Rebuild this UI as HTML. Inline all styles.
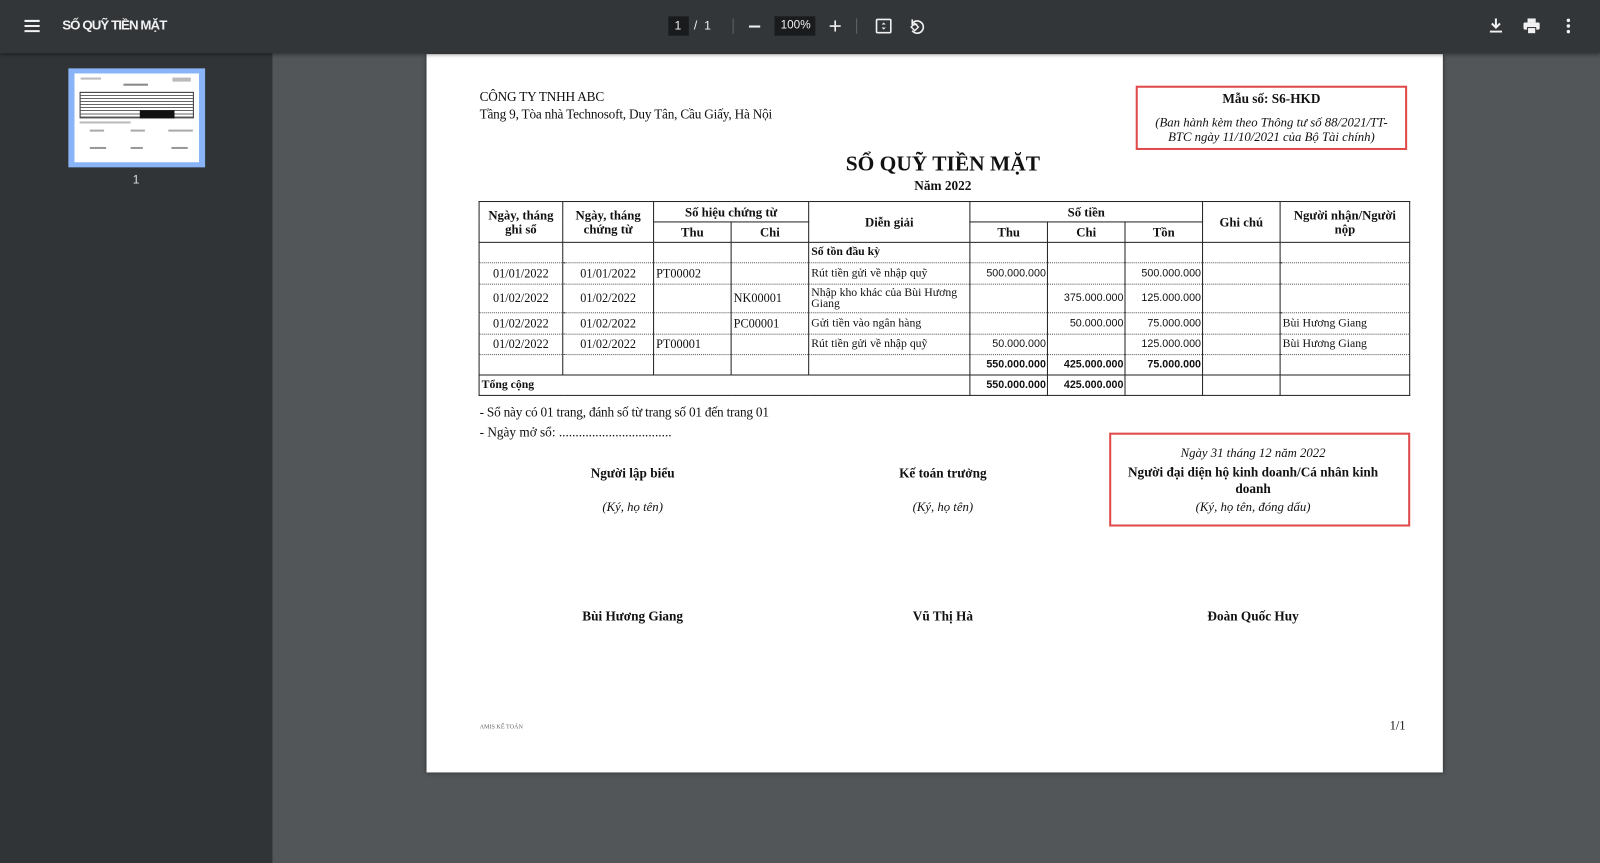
<!DOCTYPE html>
<html><head><meta charset="utf-8"><style>
*{margin:0;padding:0;box-sizing:border-box}
html,body{width:1600px;height:863px;overflow:hidden;background:#525659}
#w{position:absolute;left:0;top:0;width:1568px;height:846px;transform:scale(1.020408);transform-origin:0 0;background:#525659;font-family:"Liberation Serif",serif}
.a{position:absolute}
#tb{left:0;top:0;width:1568px;height:52px;background:#323639;box-shadow:0 2px 4px rgba(0,0,0,.4);z-index:3}
#sb{left:0;top:52px;width:267px;height:794px;background:#303437}
.ui{font-family:"Liberation Sans",sans-serif;color:#f1f1f1}
#pg{left:418px;top:53px;width:996px;height:704px;background:#fff;box-shadow:0 0 4px rgba(0,0,0,.5)}
.t{position:absolute;white-space:nowrap;color:#111}
.c{transform:translateX(-50%);text-align:center}
.b{font-weight:bold}.i{font-style:italic}
table{position:absolute;left:51px;top:144px;border-collapse:collapse;font-size:12px;color:#111}
td{border:1px solid #222;padding:0 2px;height:20px;line-height:11px;vertical-align:middle}
.h{font-weight:bold;text-align:center;font-size:12.5px;line-height:14px}
.n{font-family:"Liberation Sans",sans-serif;font-size:10.5px;text-align:right;padding-right:1px}
tr.d td{border-bottom:1px dotted #555;border-top:1px dotted #555}
.r{border:2px solid #e04a4a}
</style></head><body><div id="w">
<div id="tb" class="a">
 <svg class="a" style="left:24px;top:19px" width="15" height="13"><path d="M0 1.5H15M0 6.5H15M0 11.5H15" stroke="#f1f1f1" stroke-width="2"/></svg>
 <div class="a ui" style="left:61px;top:17px;font-size:13px;font-weight:bold;letter-spacing:-.9px">SỐ QUỸ TIỀN MẶT</div>
 <div class="a" style="left:655px;top:16px;width:20px;height:19px;background:#191b1c"></div>
 <div class="a ui" style="left:661px;top:18px;font-size:12px">1</div>
 <div class="a ui" style="left:680px;top:18px;font-size:12px">/&nbsp;&nbsp;1</div>
 <div class="a" style="left:718px;top:18px;width:1px;height:15px;background:#5f6368"></div>
 <div class="a" style="left:734px;top:25px;width:11px;height:1.5px;background:#f1f1f1"></div>
 <div class="a" style="left:759px;top:16px;width:40px;height:19px;background:#191b1c"></div>
 <div class="a ui" style="left:765px;top:19px;font-size:11.5px">100%</div>
 <svg class="a" style="left:813px;top:20px" width="11" height="11"><path d="M0 5.5H11M5.5 0V11" stroke="#f1f1f1" stroke-width="1.6"/></svg>
 <div class="a" style="left:839px;top:18px;width:1px;height:15px;background:#5f6368"></div>
 <svg class="a" style="left:858px;top:18px" width="16" height="15"><rect x="1" y="1" width="14" height="13" rx="1" fill="none" stroke="#f1f1f1" stroke-width="1.6"/><path d="M8 4l-2 2h4zM8 11l-2-2h4z" fill="#f1f1f1"/></svg>
 <svg class="a" style="left:890px;top:17px" width="16" height="17"><path d="M4 6a6 6 0 1 1 0 7" fill="none" stroke="#f1f1f1" stroke-width="1.6"/><path d="M4 2v5h5" fill="none" stroke="#f1f1f1" stroke-width="1.6"/><rect x="4" y="7" width="5" height="5" transform="rotate(45 6.5 9.5)" fill="none" stroke="#f1f1f1" stroke-width="1.4"/></svg>
 <svg class="a" style="left:1460px;top:18px" width="12" height="14"><path d="M6 0v8M2 5l4 4 4-4" fill="none" stroke="#f1f1f1" stroke-width="2"/><path d="M0 13H12" stroke="#f1f1f1" stroke-width="2"/></svg>
 <svg class="a" style="left:1493px;top:18px" width="16" height="15"><rect x="4" y="0" width="8" height="4" fill="#f1f1f1"/><rect x="0" y="4" width="16" height="7" rx="1.5" fill="#f1f1f1"/><rect x="4" y="9" width="8" height="6" fill="#f1f1f1" stroke="#323639" stroke-width="1"/></svg>
 <svg class="a" style="left:1535px;top:18px" width="4" height="15"><circle cx="2" cy="2" r="1.7" fill="#f1f1f1"/><circle cx="2" cy="7.5" r="1.7" fill="#f1f1f1"/><circle cx="2" cy="13" r="1.7" fill="#f1f1f1"/></svg>
</div>
<div id="sb" class="a">
 <div class="a" style="left:67px;top:15px;width:134px;height:97px;background:#8ab4f8"></div>
 <div class="a" style="left:73px;top:20px;width:122px;height:87px;background:#fff">
  <div class="a" style="left:6px;top:4px;width:20px;height:2px;background:#bbb"></div>
  <div class="a" style="left:96px;top:4px;width:18px;height:4px;background:#bbb"></div>
  <div class="a" style="left:48px;top:10px;width:24px;height:2px;background:#888"></div>
  <div class="a" style="left:5px;top:18px;width:112px;height:26px;border:1px solid #333;background:repeating-linear-gradient(#fff 0 2px,#666 2px 3px)"></div>
  <div class="a" style="left:64px;top:36px;width:34px;height:8px;background:#111"></div>
  <div class="a" style="left:5px;top:47px;width:50px;height:2px;background:#bbb"></div>
  <div class="a" style="left:15px;top:55px;width:14px;height:2px;background:#aaa"></div>
  <div class="a" style="left:55px;top:55px;width:14px;height:2px;background:#aaa"></div>
  <div class="a" style="left:92px;top:55px;width:24px;height:2px;background:#aaa"></div>
  <div class="a" style="left:15px;top:72px;width:16px;height:2px;background:#999"></div>
  <div class="a" style="left:55px;top:72px;width:12px;height:2px;background:#999"></div>
  <div class="a" style="left:95px;top:72px;width:16px;height:2px;background:#999"></div>
 </div>
 <div class="a ui" style="left:130px;top:117px;font-size:12px;color:#ddd">1</div>
</div>
<div id="pg" class="a">
 <div class="t" style="left:52px;top:34px;font-size:13px;letter-spacing:-.2px">CÔNG TY TNHH ABC</div>
 <div class="t" style="left:52px;top:51px;font-size:13px;letter-spacing:-.2px">Tầng 9, Tòa nhà Technosoft, Duy Tân, Cầu Giấy, Hà Nội</div>
 <div class="a r" style="left:695px;top:31px;width:266px;height:63px"></div>
 <div class="t c b" style="left:828px;top:36px;font-size:13px">Mẫu số: S6-HKD</div>
 <div class="t c i" style="left:828px;top:60px;font-size:12.5px;line-height:14px">(Ban hành kèm theo Thông tư số 88/2021/TT-<br>BTC ngày 11/10/2021 của Bộ Tài chính)</div>
 <div class="t c b" style="left:506px;top:95px;font-size:21px">SỔ QUỸ TIỀN MẶT</div>
 <div class="t c b" style="left:506px;top:121px;font-size:13px">Năm 2022</div>
 <table>
  <colgroup><col style="width:82px"><col style="width:89px"><col style="width:76px"><col style="width:76px"><col style="width:158px"><col style="width:76px"><col style="width:76px"><col style="width:76px"><col style="width:76px"><col style="width:127px"></colgroup>
  <tr><td rowspan="2" class="h">Ngày, tháng<br>ghi sổ</td><td rowspan="2" class="h">Ngày, tháng<br>chứng từ</td><td colspan="2" class="h">Số hiệu chứng từ</td><td rowspan="2" class="h">Diễn giải</td><td colspan="3" class="h">Số tiền</td><td rowspan="2" class="h">Ghi chú</td><td rowspan="2" class="h">Người nhận/Người<br>nộp</td></tr>
  <tr><td class="h">Thu</td><td class="h">Chi</td><td class="h">Thu</td><td class="h">Chi</td><td class="h">Tồn</td></tr>
  <tr class="d"><td></td><td></td><td></td><td></td><td class="b" style="font-size:11.5px">Số tồn đầu kỳ</td><td></td><td></td><td></td><td></td><td></td></tr>
  <tr class="d" style="height:21px"><td style="text-align:center">01/01/2022</td><td style="text-align:center">01/01/2022</td><td>PT00002</td><td></td><td style="font-size:11.5px">Rút tiền gửi về nhập quỹ</td><td class="n">500.000.000</td><td></td><td class="n">500.000.000</td><td></td><td></td></tr>
  <tr class="d"><td style="text-align:center;height:28px">01/02/2022</td><td style="text-align:center">01/02/2022</td><td></td><td>NK00001</td><td style="font-size:11.5px">Nhập kho khác của Bùi Hương Giang</td><td></td><td class="n">375.000.000</td><td class="n">125.000.000</td><td></td><td></td></tr>
  <tr class="d"><td style="text-align:center;height:21px">01/02/2022</td><td style="text-align:center">01/02/2022</td><td></td><td>PC00001</td><td style="font-size:11.5px">Gửi tiền vào ngân hàng</td><td></td><td class="n">50.000.000</td><td class="n">75.000.000</td><td></td><td style="font-size:11.5px">Bùi Hương Giang</td></tr>
  <tr class="d"><td style="text-align:center">01/02/2022</td><td style="text-align:center">01/02/2022</td><td>PT00001</td><td></td><td style="font-size:11.5px">Rút tiền gửi về nhập quỹ</td><td class="n">50.000.000</td><td></td><td class="n">125.000.000</td><td></td><td style="font-size:11.5px">Bùi Hương Giang</td></tr>
  <tr class="d"><td style="border-bottom:1px solid #222"></td><td style="border-bottom:1px solid #222"></td><td style="border-bottom:1px solid #222"></td><td style="border-bottom:1px solid #222"></td><td style="border-bottom:1px solid #222"></td><td class="n b" style="border-bottom:1px solid #222">550.000.000</td><td class="n b" style="border-bottom:1px solid #222">425.000.000</td><td class="n b" style="border-bottom:1px solid #222">75.000.000</td><td style="border-bottom:1px solid #222"></td><td style="border-bottom:1px solid #222"></td></tr>
  <tr><td colspan="5" class="b" style="font-size:11.5px">Tổng cộng</td><td class="n b">550.000.000</td><td class="n b">425.000.000</td><td></td><td></td><td></td></tr>
 </table>
 <div class="t" style="left:52px;top:343px;font-size:13px;letter-spacing:-.2px">- Sổ này có 01 trang, đánh số từ trang số 01 đến trang 01</div>
 <div class="t" style="left:52px;top:363px;font-size:13px">- Ngày mở sổ: ..................................</div>
 <div class="a r" style="left:669px;top:371px;width:295px;height:92px"></div>
 <div class="t c i" style="left:810px;top:384px;font-size:12.5px">Ngày 31 tháng 12 năm 2022</div>
 <div class="t c b" style="left:810px;top:402px;font-size:13px;line-height:16px">Người đại diện hộ kinh doanh/Cá nhân kinh<br>doanh</div>
 <div class="t c i" style="left:810px;top:437px;font-size:12.5px">(Ký, họ tên, đóng dấu)</div>
 <div class="t c b" style="left:202px;top:403px;font-size:13px">Người lập biểu</div>
 <div class="t c b" style="left:506px;top:403px;font-size:13px">Kế toán trưởng</div>
 <div class="t c i" style="left:202px;top:437px;font-size:12.5px">(Ký, họ tên)</div>
 <div class="t c i" style="left:506px;top:437px;font-size:12.5px">(Ký, họ tên)</div>
 <div class="t c b" style="left:202px;top:543px;font-size:13px">Bùi Hương Giang</div>
 <div class="t c b" style="left:506px;top:543px;font-size:13px">Vũ Thị Hà</div>
 <div class="t c b" style="left:810px;top:543px;font-size:13px">Đoàn Quốc Huy</div>
 <div class="t" style="left:52px;top:657px;font-size:6px;color:#666">AMIS KẾ TOÁN</div>
 <div class="t" style="left:944px;top:651px;font-size:12px">1/1</div>
</div>
</div></body></html>
